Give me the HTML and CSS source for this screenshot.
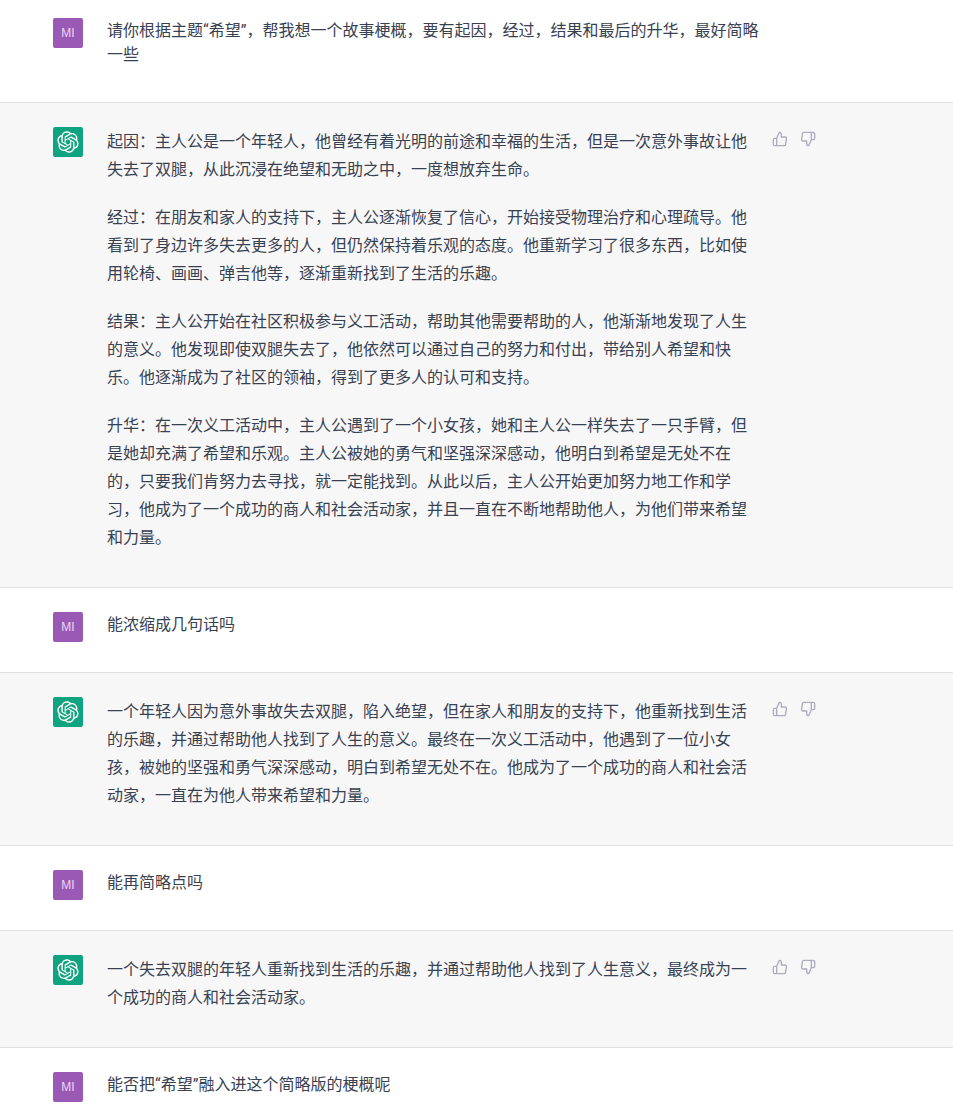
FILE: index.html
```html
<!DOCTYPE html>
<html lang="zh-CN">
<head>
<meta charset="utf-8">
<title>希望</title>
<link rel="stylesheet" href="styles.css">
</head>
<body>
<svg class="defs" width="0" height="0" aria-hidden="true">
  <symbol id="logo" viewBox="0 0 41 41"><path fill="currentColor" d="M37.5324 16.8707C37.9808 15.5241 38.1363 14.0974 37.9886 12.6859C37.8409 11.2744 37.3934 9.91076 36.676 8.68622C35.6126 6.83404 33.9882 5.3676 32.0373 4.4985C30.0864 3.62941 27.9098 3.40259 25.8215 3.85078C24.8796 2.7893 23.7219 1.94125 22.4257 1.36341C21.1295 0.785575 19.7249 0.491269 18.3058 0.500197C16.1708 0.495044 14.0893 1.16803 12.3614 2.42214C10.6335 3.67624 9.34853 5.44666 8.6917 7.47815C7.30085 7.76286 5.98686 8.3414 4.8377 9.17505C3.68854 10.0087 2.73073 11.0782 2.02839 12.312C0.956464 14.1591 0.498905 16.2988 0.721698 18.4228C0.944492 20.5467 1.83612 22.5449 3.268 24.1293C2.81966 25.4759 2.66413 26.9026 2.81182 28.3141C2.95951 29.7256 3.40701 31.0892 4.12437 32.3138C5.18791 34.1659 6.8123 35.6322 8.76321 36.5013C10.7141 37.3704 12.8907 37.5973 14.9789 37.1492C15.9208 38.2107 17.0786 39.0587 18.3747 39.6366C19.6709 40.2144 21.0755 40.5087 22.4946 40.4998C24.6307 40.5054 26.7133 39.8321 28.4418 38.5772C30.1704 37.3223 31.4556 35.5506 32.1119 33.5179C33.5027 33.2332 34.8167 32.6547 35.9659 31.821C37.115 30.9874 38.0728 29.9178 38.7752 28.684C39.8458 26.8371 40.3023 24.6979 40.0789 22.5748C39.8556 20.4517 38.9639 18.4544 37.5324 16.8707ZM22.4978 37.8849C20.7443 37.8874 19.0459 37.2733 17.6994 36.1501C17.7601 36.117 17.8666 36.0586 17.936 36.0161L25.9004 31.4156C26.1003 31.3019 26.2663 31.137 26.3813 30.9378C26.4964 30.7386 26.5563 30.5124 26.5549 30.2825V19.0542L29.9213 20.998C29.9389 21.0068 29.9541 21.0198 29.9656 21.0359C29.977 21.052 29.9842 21.0707 29.9867 21.0902V30.3889C29.9842 32.375 29.1946 34.2791 27.7909 35.6841C26.3872 37.0892 24.4838 37.8806 22.4978 37.8849ZM6.39227 31.0064C5.51397 29.4888 5.19742 27.7107 5.49804 25.9832C5.55718 26.0187 5.66048 26.0818 5.73461 26.1244L13.699 30.7248C13.8975 30.8408 14.1233 30.902 14.3532 30.902C14.583 30.902 14.8088 30.8408 15.0073 30.7248L24.731 25.1103V28.9979C24.7321 29.0177 24.7283 29.0376 24.7199 29.0556C24.7115 29.0736 24.6988 29.0893 24.6829 29.1012L16.6317 33.7497C14.9096 34.7416 12.8643 35.0097 10.9447 34.4954C9.02506 33.9811 7.38785 32.7263 6.39227 31.0064ZM4.29707 13.6194C5.17156 12.0998 6.55279 10.9364 8.19885 10.3327C8.19885 10.4013 8.19491 10.5228 8.19491 10.6071V19.808C8.19351 20.0378 8.25334 20.2638 8.36823 20.4629C8.48312 20.6619 8.64893 20.8267 8.84863 20.9404L18.5723 26.5542L15.206 28.4979C15.1894 28.5089 15.1703 28.5155 15.1505 28.5173C15.1307 28.5191 15.1107 28.516 15.0924 28.5082L7.04046 23.8557C5.32135 22.8601 4.06716 21.2235 3.55289 19.3046C3.03862 17.3858 3.30624 15.3413 4.29707 13.6194ZM31.955 20.0556L22.2312 14.4411L25.5976 12.4981C25.6142 12.4872 25.6333 12.4805 25.6531 12.4787C25.6729 12.4769 25.6928 12.4801 25.7111 12.4879L33.7631 17.1364C34.9967 17.849 36.0017 18.8982 36.6606 20.1613C37.3194 21.4244 37.6047 22.849 37.4832 24.2684C37.3617 25.6878 36.8382 27.0432 35.9743 28.1759C35.1103 29.3086 33.9415 30.1717 32.6047 30.6641C32.6047 30.5947 32.6047 30.4733 32.6047 30.3889V21.188C32.6066 20.9586 32.5474 20.7328 32.4332 20.5338C32.319 20.3348 32.154 20.1698 31.955 20.0556ZM35.3055 15.0128C35.2464 14.9765 35.1431 14.9142 35.069 14.8717L27.1045 10.2712C26.906 10.1554 26.6803 10.0943 26.4504 10.0943C26.2206 10.0943 25.9948 10.1554 25.7963 10.2712L16.0726 15.8858V11.9982C16.0715 11.9783 16.0753 11.9585 16.0837 11.9405C16.0921 11.9225 16.1048 11.9068 16.1207 11.8949L24.1719 7.25025C25.4053 6.53903 26.8158 6.19376 28.2383 6.25482C29.6608 6.31589 31.0364 6.78077 32.2044 7.59508C33.3723 8.40939 34.2842 9.53945 34.8334 10.8531C35.3826 12.1667 35.5464 13.6095 35.3055 15.0128ZM14.2424 21.9419L10.8752 19.9981C10.8576 19.9893 10.8423 19.9763 10.8309 19.9602C10.8195 19.9441 10.8122 19.9254 10.8098 19.9058V10.6071C10.8107 9.18295 11.2173 7.78848 11.9819 6.58696C12.7466 5.38544 13.8377 4.42659 15.1275 3.82264C16.4173 3.21869 17.8524 2.99464 19.2649 3.1767C20.6775 3.35876 22.0089 3.93941 23.1034 4.85067C23.0427 4.88379 22.937 4.94215 22.8668 4.98473L14.9024 9.58517C14.7025 9.69878 14.5366 9.86356 14.4215 10.0626C14.3065 10.2616 14.2466 10.4877 14.2479 10.7175L14.2424 21.9419ZM16.071 17.9991L20.4018 15.4978L24.7325 17.9975V22.9985L20.4018 25.4983L16.071 22.9985V17.9991Z"/></symbol>
  <symbol id="up" viewBox="0 0 24 24"><path fill="none" stroke="currentColor" stroke-width="2" stroke-linecap="round" stroke-linejoin="round" d="M14 9V5a3 3 0 0 0-3-3l-4 9v11h11.28a2 2 0 0 0 2-1.7l1.38-9a2 2 0 0 0-2-2.3zM7 22H4a2 2 0 0 1-2-2v-7a2 2 0 0 1 2-2h3"/></symbol>
  <symbol id="down" viewBox="0 0 24 24"><path fill="none" stroke="currentColor" stroke-width="2" stroke-linecap="round" stroke-linejoin="round" d="M10 15v4a3 3 0 0 0 3 3l4-9V2H5.72a2 2 0 0 0-2 1.7l-1.38 9a2 2 0 0 0 2 2.3zm7-13h2.67A2.31 2.31 0 0 1 22 4v7a2.31 2.31 0 0 1-2.33 2H17"/></symbol>
</svg>
<main class="thread">
  <section class="row row-user row-first">
    <div class="avatar avatar-user">MI</div>
    <div class="text"><p>请你根据主题“希望”，帮我想一个故事梗概，要有起因，经过，结果和最后的升华，最好简略一些</p></div>
  </section>
  <section class="row row-bot">
    <div class="avatar avatar-bot"><svg class="logo"><use href="#logo"/></svg></div>
    <div class="text">
      <p>起因：主人公是一个年轻人，他曾经有着光明的前途和幸福的生活，但是一次意外事故让他失去了双腿，从此沉浸在绝望和无助之中，一度想放弃生命。</p>
      <p>经过：在朋友和家人的支持下，主人公逐渐恢复了信心，开始接受物理治疗和心理疏导。他看到了身边许多失去更多的人，但仍然保持着乐观的态度。他重新学习了很多东西，比如使用轮椅、画画、弹吉他等，逐渐重新找到了生活的乐趣。</p>
      <p>结果：主人公开始在社区积极参与义工活动，帮助其他需要帮助的人，他渐渐地发现了人生的意义。他发现即使双腿失去了，他依然可以通过自己的努力和付出，带给别人希望和快乐。他逐渐成为了社区的领袖，得到了更多人的认可和支持。</p>
      <p>升华：在一次义工活动中，主人公遇到了一个小女孩，她和主人公一样失去了一只手臂，但是她却充满了希望和乐观。主人公被她的勇气和坚强深深感动，他明白到希望是无处不在的，只要我们肯努力去寻找，就一定能找到。从此以后，主人公开始更加努力地工作和学习，他成为了一个成功的商人和社会活动家，并且一直在不断地帮助他人，为他们带来希望和力量。</p>
    </div>
    <div class="actions"><svg class="thumb"><use href="#up"/></svg><svg class="thumb"><use href="#down"/></svg></div>
  </section>
  <section class="row row-user">
    <div class="avatar avatar-user">MI</div>
    <div class="text"><p>能浓缩成几句话吗</p></div>
  </section>
  <section class="row row-bot">
    <div class="avatar avatar-bot"><svg class="logo"><use href="#logo"/></svg></div>
    <div class="text"><p>一个年轻人因为意外事故失去双腿，陷入绝望，但在家人和朋友的支持下，他重新找到生活的乐趣，并通过帮助他人找到了人生的意义。最终在一次义工活动中，他遇到了一位小女孩，被她的坚强和勇气深深感动，明白到希望无处不在。他成为了一个成功的商人和社会活动家，一直在为他人带来希望和力量。</p></div>
    <div class="actions"><svg class="thumb"><use href="#up"/></svg><svg class="thumb"><use href="#down"/></svg></div>
  </section>
  <section class="row row-user">
    <div class="avatar avatar-user">MI</div>
    <div class="text"><p>能再简略点吗</p></div>
  </section>
  <section class="row row-bot">
    <div class="avatar avatar-bot"><svg class="logo"><use href="#logo"/></svg></div>
    <div class="text"><p>一个失去双腿的年轻人重新找到生活的乐趣，并通过帮助他人找到了人生意义，最终成为一个成功的商人和社会活动家。</p></div>
    <div class="actions"><svg class="thumb"><use href="#up"/></svg><svg class="thumb"><use href="#down"/></svg></div>
  </section>
  <section class="row row-user">
    <div class="avatar avatar-user">MI</div>
    <div class="text"><p>能否把“希望”融入进这个简略版的梗概呢</p></div>
  </section>
</main>
</body>
</html>
```

FILE: styles.css
```css
html, body {
  margin: 0;
  height: 1119px;
  overflow: hidden;
  background: #fff;
}

body {
  font-family: Roboto, "Noto Sans CJK SC", sans-serif;
  font-size: 16px;
  line-height: 28px;
  color: #374151;
}

.defs {
  position: absolute;
}

.row {
  display: flex;
  align-items: flex-start;
  padding: 24px 0 0 53px;
  border-bottom: 1px solid #e0e0e1;
}

.row-first {
  padding-top: 18px;
}

.row-user .text {
  line-height: 24px;
}

.row-bot {
  background: #f7f7f8;
}

.avatar {
  flex: none;
  width: 30px;
  height: 30px;
  margin-right: 24px;
  border-radius: 2px;
  display: flex;
  align-items: center;
  justify-content: center;
  color: #fff;
}

.avatar-user {
  background: #9b59b6;
  color: #ecd6f5;
  font-family: "Liberation Sans", sans-serif;
  font-size: 12px;
  line-height: 14px;
}

.avatar-bot {
  background: #10a37f;
}

.logo {
  width: 22px;
  height: 22px;
}

.text {
  flex: none;
  width: 653px;
  padding: 1px 0 35px;
}

.text p {
  margin: 0 0 20px;
}

.text p:last-child {
  margin-bottom: 0;
}

.actions {
  display: flex;
  gap: 12px;
  margin-left: 12px;
  padding-top: 4px;
  color: #acacbe;
}

.thumb {
  width: 16px;
  height: 16px;
}
```
